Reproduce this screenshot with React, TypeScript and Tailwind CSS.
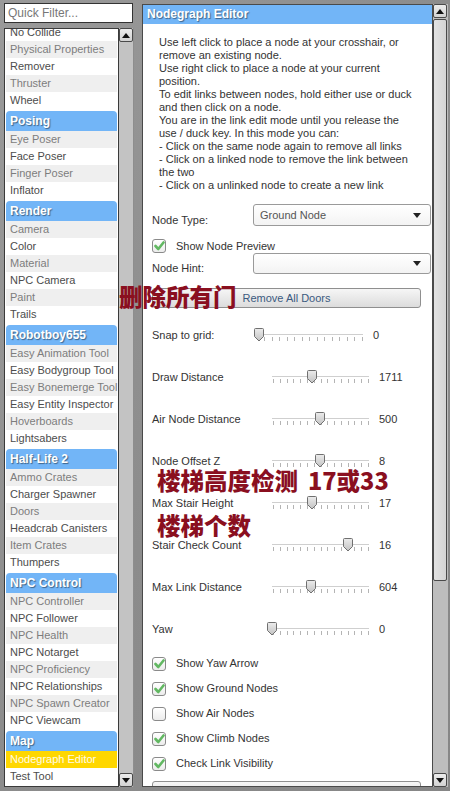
import React from "react";

type Section = { title: string | null; items: string[]; firstGray: boolean };

const sections: Section[] = [
  { title: null, firstGray: false, items: ["No Collide", "Physical Properties", "Remover", "Thruster", "Wheel"] },
  { title: "Posing", firstGray: true, items: ["Eye Poser", "Face Poser", "Finger Poser", "Inflator"] },
  { title: "Render", firstGray: true, items: ["Camera", "Color", "Material", "NPC Camera", "Paint", "Trails"] },
  {
    title: "Robotboy655",
    firstGray: true,
    items: ["Easy Animation Tool", "Easy Bodygroup Tool", "Easy Bonemerge Tool", "Easy Entity Inspector", "Hoverboards", "Lightsabers"],
  },
  { title: "Half-Life 2", firstGray: true, items: ["Ammo Crates", "Charger Spawner", "Doors", "Headcrab Canisters", "Item Crates", "Thumpers"] },
  {
    title: "NPC Control",
    firstGray: true,
    items: ["NPC Controller", "NPC Follower", "NPC Health", "NPC Notarget", "NPC Proficiency", "NPC Relationships", "NPC Spawn Creator", "NPC Viewcam"],
  },
  { title: "Map", firstGray: true, items: ["Nodegraph Editor", "Test Tool"] },
];

const description = [
  "Use left click to place a node at your crosshair, or",
  "remove an existing node.",
  "Use right click to place a node at your current",
  "position.",
  "To edit links between nodes, hold either use or duck",
  "and then click on a node.",
  "You are in the link edit mode until you release the",
  "use / duck key. In this mode you can:",
  "- Click on the same node again to remove all links",
  "- Click on a linked node to remove the link between",
  "the two",
  "- Click on a unlinked node to create a new link",
];

function ScrollButton({ down }: { down?: boolean }) {
  return (
    <div className="w-[14px] h-[14px] shrink-0 border border-[#4a4a4a] rounded-[2px] bg-gradient-to-b from-[#ececec] to-[#d2d2d2] flex items-center justify-center">
      <svg width="8" height="5" viewBox="0 0 8 5">
        {down ? <path d="M0 0 H8 L4 5 Z" fill="#111" /> : <path d="M0 5 H8 L4 0 Z" fill="#111" />}
      </svg>
    </div>
  );
}

function Header({ title }: { title: string }) {
  return (
    <div className="mt-[2px] h-[20px] leading-[20px] rounded-t-[4px] pl-[4px] bg-[#72b5f7] text-white text-[12px] font-bold [text-shadow:1px_1px_1px_rgba(0,0,0,0.45)] whitespace-nowrap">
      {title}
    </div>
  );
}

function Row({ text, gray, selected }: { text: string; gray: boolean; selected?: boolean }) {
  const cls = selected
    ? "bg-[#ffd700] text-[#fffbe6]"
    : gray
    ? "bg-[#efefef] text-[#7d7d7d]"
    : "bg-white text-[#4c4c4c]";
  return <div className={`h-[17px] leading-[17px] pl-[4px] text-[11px] whitespace-nowrap ${cls}`}>{text}</div>;
}

function Dropdown({ text, h }: { text?: string; h: number }) {
  return (
    <div
      className={`w-[178px] ${h === 22 ? "h-[22px]" : "h-[21px]"} border border-[#9a9a9a] rounded-[3px] bg-gradient-to-b from-white to-[#f3f3f3] flex items-center justify-between pl-[6px] pr-[9px]`}
    >
      <span className="text-[11px] text-[#555]">{text ?? ""}</span>
      <svg width="8" height="5" viewBox="0 0 8 5">
        <path d="M0 0 H8 L4 5 Z" fill="#222" />
      </svg>
    </div>
  );
}

function Box({ checked }: { checked: boolean }) {
  return (
    <div className="w-[14px] h-[14px] shrink-0 border border-[#8a8a8a] rounded-[3px] bg-gradient-to-b from-white to-[#ececec] flex items-center justify-center">
      {checked && (
        <svg width="11" height="10" viewBox="0 0 11 10">
          <path d="M1.5 5 L4.3 8 L9.5 1.5" fill="none" stroke="#62b862" strokeWidth="2.6" strokeLinecap="round" strokeLinejoin="round" />
        </svg>
      )}
    </div>
  );
}

function Check({ checked, label }: { checked: boolean; label: string }) {
  return (
    <div className="h-[25px] flex items-center">
      <Box checked={checked} />
      <span className="ml-[10px] text-[11px] text-[#333]">{label}</span>
    </div>
  );
}

function SliderRow({
  label,
  value,
  pos,
  snap,
}: {
  label: string;
  value: string;
  pos: number;
  snap?: boolean;
}) {
  const w = snap ? 118 : 107;
  const ts = 5;
  const te = w - 5;
  const n = snap ? 14 : 15;
  const tickStart = snap ? 14 : ts + 1;
  const ticks = Array.from({ length: n }, (_, i) => tickStart + (i * (te - 1 - tickStart)) / (n - 1));
  return (
    <div className="h-[42px] flex items-center">
      <span className={`${snap ? "w-[98px]" : "w-[115px]"} shrink-0 text-[11px] text-[#333] whitespace-nowrap`}>{label}</span>
      <svg width={w} height="14" viewBox={`0 0 ${w} 14`} className="shrink-0">
        <defs>
          <linearGradient id="thumbg" x1="0" y1="0" x2="0" y2="1">
            <stop offset="0" stopColor="#ececec" />
            <stop offset="1" stopColor="#c2c2c2" />
          </linearGradient>
        </defs>
        <line x1={ts} y1="6.5" x2={te} y2="6.5" stroke="#cfcfcf" strokeWidth="1" />
        {ticks.map((x, i) => (
          <line key={i} x1={Math.round(x) + 0.5} y1="9" x2={Math.round(x) + 0.5} y2="13" stroke="#b4b4b4" strokeWidth="1" />
        ))}
        <path
          d={`M${pos - 4.5} 1.5 Q${pos - 4.5} 0.5 ${pos - 3.5} 0.5 H${pos + 3.5} Q${pos + 4.5} 0.5 ${pos + 4.5} 1.5 V8.5 L${pos} 13 L${pos - 4.5} 8.5 Z`}
          fill="url(#thumbg)"
          stroke="#707070"
          strokeWidth="1"
        />
      </svg>
      <span className="ml-[5px] text-[11px] text-[#333]">{value}</span>
    </div>
  );
}

export default function App() {
  return (
    <div className="relative w-[450px] h-[791px] overflow-hidden bg-gradient-to-br from-[#9a9a9a] via-[#8c8c8c] to-[#868686] font-['Liberation_Sans',Arial,sans-serif] flex pt-[3px] pl-[4px]">
      {/* Left column */}
      <div className="w-[130px] shrink-0 flex flex-col">
        <div className="w-[129px] h-[20px] border border-[#333] bg-white flex items-center pl-[3px] text-[12px] text-[#777]">
          Quick Filter...
        </div>
        <div className="mt-[5px] h-[759px] flex">
          <div className="w-[115px] h-full border border-[#3a3a3a] bg-white overflow-hidden">
            <div className="-mt-[5px] px-[1px]">
              {sections.map((s, si) => (
                <div key={si}>
                  {s.title && <Header title={s.title} />}
                  {s.items.map((it, i) => (
                    <Row
                      key={it}
                      text={it}
                      gray={s.firstGray ? i % 2 === 0 : i % 2 === 1}
                      selected={it === "Nodegraph Editor"}
                    />
                  ))}
                </div>
              ))}
            </div>
          </div>
          <div className="w-[15px] h-full bg-[#c3c3c3] border-r border-[#8e8e8e] flex flex-col justify-between">
            <ScrollButton />
            <ScrollButton down />
          </div>
        </div>
      </div>

      {/* Right column */}
      <div className="ml-[8px] mt-[1px] h-[783px] flex">
        <div className="w-[291px] h-full border border-[#4a4a4a] bg-white overflow-hidden flex flex-col">
          <div className="h-[19px] shrink-0 leading-[19px] bg-[#72b5f7] pl-[4px] text-white text-[12px] font-bold [text-shadow:1px_1px_1px_rgba(0,0,0,0.45)]">
            Nodegraph Editor
          </div>
          <div className="pl-[9px] flex flex-col">
            <div className="mt-[12px] pl-[7px]">
              {description.map((l, i) => (
                <div key={i} className="h-[13px] leading-[13px] text-[11px] text-[#333] whitespace-nowrap">
                  {l}
                </div>
              ))}
            </div>
            <div className="mt-[12px] flex items-end">
              <span className="w-[101px] -mb-[2px] text-[11px] text-[#333]">Node Type:</span>
              <Dropdown text="Ground Node" h={22} />
            </div>
            <div className="mt-[13px] h-[14px] flex items-center">
              <Box checked />
              <span className="ml-[10px] text-[11px] text-[#333]">Show Node Preview</span>
            </div>
            <div className="flex items-end">
              <span className="w-[101px] -mb-[2px] text-[11px] text-[#333]">Node Hint:</span>
              <Dropdown h={21} />
            </div>
            <div className="mt-[14px] w-[269px] h-[20px] border border-[#8f8f8f] rounded-[3px] bg-gradient-to-b from-[#f6f6f6] to-[#dcdcdc] flex items-center justify-center text-[11px] text-[#3b5a80]">
              Remove All Doors
            </div>
            <div className="mt-[6px]">
              <SliderRow label="Snap to grid:" value="0" pos={9} snap />
              <SliderRow label="Draw Distance" value="1711" pos={45} />
              <SliderRow label="Air Node Distance" value="500" pos={53} />
              <SliderRow label="Node Offset Z" value="8" pos={53} />
              <SliderRow label="Max Stair Height" value="17" pos={45} />
              <SliderRow label="Stair Check Count" value="16" pos={81} />
              <SliderRow label="Max Link Distance" value="604" pos={44} />
              <SliderRow label="Yaw" value="0" pos={5} />
            </div>
            <div className="mt-[1px]">
              <Check checked label="Show Yaw Arrow" />
              <Check checked label="Show Ground Nodes" />
              <Check checked={false} label="Show Air Nodes" />
              <Check checked label="Show Climb Nodes" />
              <Check checked label="Check Link Visibility" />
            </div>
            <div className="mt-[5px] w-[269px] h-[20px] shrink-0 border border-[#8f8f8f] rounded-[3px] bg-gradient-to-b from-[#f6f6f6] to-[#dcdcdc]" />
          </div>
        </div>
        <div className="w-[15px] h-full flex flex-col bg-[#bdbdbd]">
          <ScrollButton />
          <div className="mt-[1px] h-[562px] w-[14px] border border-[#4a4a4a] rounded-[2px] bg-gradient-to-r from-[#e2e2e2] to-[#d4d4d4]" />
          <div className="flex-1" />
          <ScrollButton down />
        </div>
      </div>

      {/* Chinese annotation overlays */}
      <div className="absolute left-[119px] top-[285px] text-[23.5px] leading-none font-black text-[#8a0f1f] font-['Noto_Sans_CJK_SC',sans-serif] whitespace-nowrap">
        删除所有门
      </div>
      <div className="absolute left-[157px] top-[469px] text-[23.5px] leading-none font-black text-[#8a0f1f] font-['Noto_Sans_CJK_SC',sans-serif] whitespace-nowrap">
        楼梯高度检测<span className="ml-[10px]">17或33</span>
      </div>
      <div className="absolute left-[157px] top-[514px] text-[23.5px] leading-none font-black text-[#8a0f1f] font-['Noto_Sans_CJK_SC',sans-serif] whitespace-nowrap">
        楼梯个数
      </div>
    </div>
  );
}
